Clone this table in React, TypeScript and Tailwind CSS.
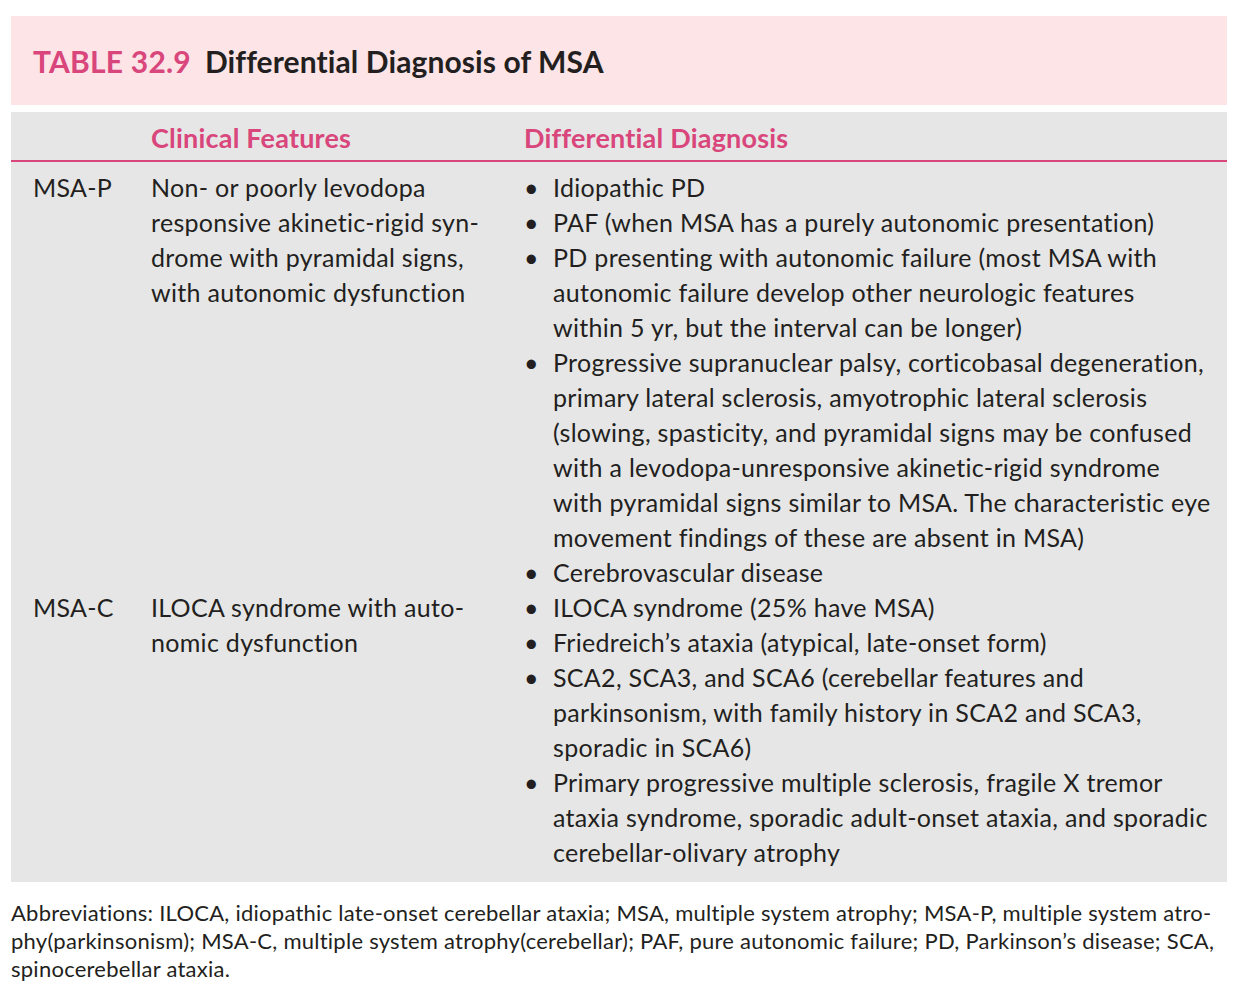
import React from 'react';

type Row = {
  label: string;
  features: string[];
  items: string[][];
};

const rows: Row[] = [
  {
    label: 'MSA-P',
    features: [
      'Non- or poorly levodopa',
      'responsive akinetic-rigid syn-',
      'drome with pyramidal signs,',
      'with autonomic dysfunction',
    ],
    items: [
      ['Idiopathic PD'],
      ['PAF (when MSA has a purely autonomic presentation)'],
      [
        'PD presenting with autonomic failure (most MSA with',
        'autonomic failure develop other neurologic features',
        'within 5 yr, but the interval can be longer)',
      ],
      [
        'Progressive supranuclear palsy, corticobasal degeneration,',
        'primary lateral sclerosis, amyotrophic lateral sclerosis',
        '(slowing, spasticity, and pyramidal signs may be confused',
        'with a levodopa-unresponsive akinetic-rigid syndrome',
        'with pyramidal signs similar to MSA. The characteristic eye',
        'movement findings of these are absent in MSA)',
      ],
      ['Cerebrovascular disease'],
    ],
  },
  {
    label: 'MSA-C',
    features: ['ILOCA syndrome with auto-', 'nomic dysfunction'],
    items: [
      ['ILOCA syndrome (25% have MSA)'],
      ['Friedreich\u2019s ataxia (atypical, late-onset form)'],
      [
        'SCA2, SCA3, and SCA6 (cerebellar features and',
        'parkinsonism, with family history in SCA2 and SCA3,',
        'sporadic in SCA6)',
      ],
      [
        'Primary progressive multiple sclerosis, fragile X tremor',
        'ataxia syndrome, sporadic adult-onset ataxia, and sporadic',
        'cerebellar-olivary atrophy',
      ],
    ],
  },
];

const font = { fontFamily: 'Lato, "Open Sans", sans-serif' };

export default function App() {
  return (
    <div className="w-[1244px] h-[995px] bg-white text-[#231f20]" style={font}>
      <div className="pt-4 px-[11px] pr-[17px]">
        {/* Title */}
        <div className="h-[89px] bg-[#fce4e7] flex items-center pl-[22px] pt-[2px]">
          <span className="text-[30px] font-bold text-[#d9467c] tracking-[0.2px]">TABLE 32.9</span>
          <span className="ml-[14px] text-[30px] font-bold tracking-[0.1px]">Differential Diagnosis of MSA</span>
        </div>

        {/* Table */}
        <div className="mt-[7px] bg-[#e6e6e6] pb-[12px]">
          <div className="h-[48px] grid grid-cols-[118px_373px_1fr] items-center pl-[22px] pt-[4px] text-[27px] font-bold text-[#d9467c] tracking-[0.2px]">
            <div />
            <div>Clinical Features</div>
            <div>Differential Diagnosis</div>
          </div>
          <div className="h-[2px] bg-[#d9467c]" />
          <div className="pt-[8px]">
            {rows.map((row) => (
              <div key={row.label} className="grid grid-cols-[118px_373px_1fr] pl-[22px] text-[25px] leading-[35px] tracking-[0.3px]">
                <div>{row.label}</div>
                <div>
                  {row.features.map((l) => (
                    <div key={l} className="whitespace-nowrap">{l}</div>
                  ))}
                </div>
                <div>
                  {row.items.map((item, i) => (
                    <div key={i} className="flex">
                      <div className="w-[29px] shrink-0">•</div>
                      <div>
                        {item.map((l) => (
                          <div key={l} className="whitespace-nowrap">{l}</div>
                        ))}
                      </div>
                    </div>
                  ))}
                </div>
              </div>
            ))}
          </div>
        </div>

        {/* Footnote */}
        <div className="mt-[17px] text-[22px] leading-[28px] tracking-[0.25px]">
          <div className="whitespace-nowrap">Abbreviations: ILOCA, idiopathic late-onset cerebellar ataxia; MSA, multiple system atrophy; MSA-P, multiple system atro-</div>
          <div className="whitespace-nowrap">phy(parkinsonism); MSA-C, multiple system atrophy(cerebellar); PAF, pure autonomic failure; PD, Parkinson’s disease; SCA,</div>
          <div className="whitespace-nowrap">spinocerebellar ataxia.</div>
        </div>
      </div>
    </div>
  );
}
